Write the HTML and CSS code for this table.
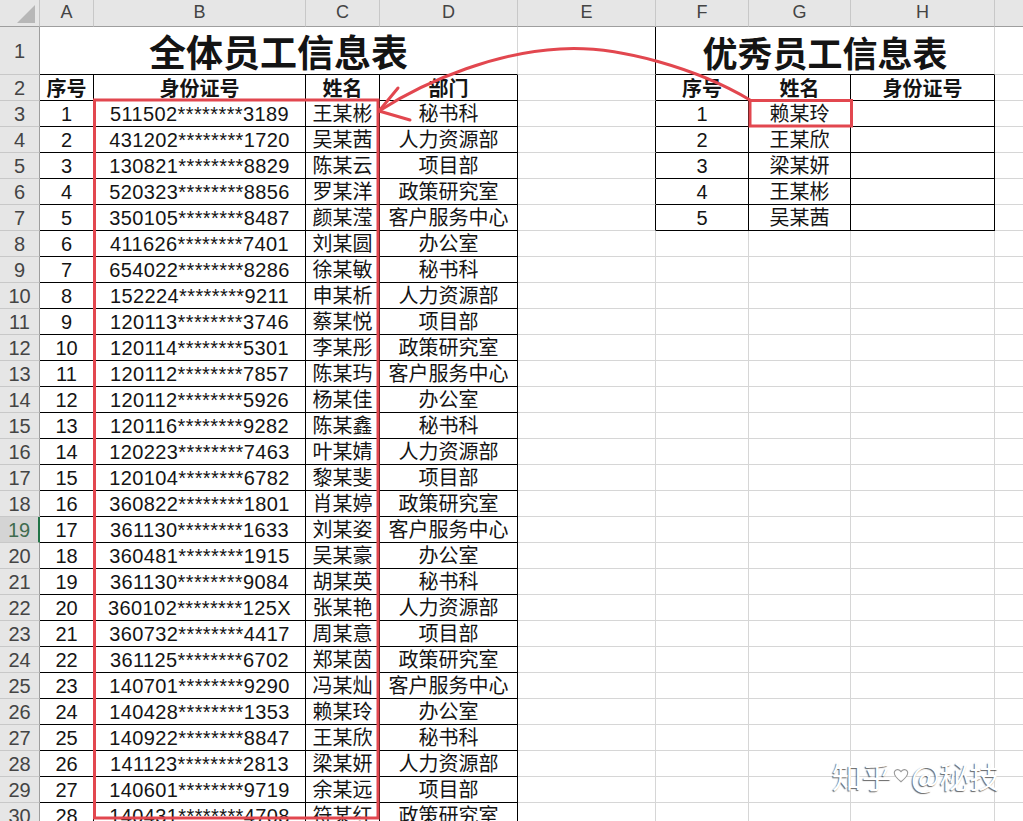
FILE: index.html
```html
<!DOCTYPE html>
<html lang="zh-CN">
<head>
<meta charset="utf-8">
<title>员工信息表</title>
<link rel="stylesheet" href="styles.css">
</head>
<body>
<div class="sheet">
<div class="corner"><svg width="40" height="27" viewBox="0 0 40 27"><polygon points="35,5 35,23 17,23" fill="#b7b7b7"/></svg></div><div class="ch">A</div><div class="ch">B</div><div class="ch">C</div><div class="ch">D</div><div class="ch">E</div><div class="ch">F</div><div class="ch">G</div><div class="ch">H</div><div class="ch"></div>
<div class="rh">1</div><div class="title t1">全体员工信息表</div><div class="ek"></div><div class="title t2">优秀员工信息表</div><div></div>
<div class="rh">2</div><div class="k b">序号</div><div class="k b">身份证号</div><div class="k b">姓名</div><div class="k b">部门</div><div class="ek"></div><div class="k b">序号</div><div class="k b">姓名</div><div class="k b">身份证号</div><div></div>
<div class="rh">3</div><div class="k">1</div><div class="k id">511502********3189</div><div class="k">王某彬</div><div class="k">秘书科</div><div class="ek"></div><div class="k">1</div><div class="k">赖某玲</div><div class="k"></div><div></div>
<div class="rh">4</div><div class="k">2</div><div class="k id">431202********1720</div><div class="k">吴某茜</div><div class="k">人力资源部</div><div class="ek"></div><div class="k">2</div><div class="k">王某欣</div><div class="k"></div><div></div>
<div class="rh">5</div><div class="k">3</div><div class="k id">130821********8829</div><div class="k">陈某云</div><div class="k">项目部</div><div class="ek"></div><div class="k">3</div><div class="k">梁某妍</div><div class="k"></div><div></div>
<div class="rh">6</div><div class="k">4</div><div class="k id">520323********8856</div><div class="k">罗某洋</div><div class="k">政策研究室</div><div class="ek"></div><div class="k">4</div><div class="k">王某彬</div><div class="k"></div><div></div>
<div class="rh">7</div><div class="k">5</div><div class="k id">350105********8487</div><div class="k">颜某滢</div><div class="k">客户服务中心</div><div class="ek"></div><div class="k">5</div><div class="k">吴某茜</div><div class="k"></div><div></div>
<div class="rh">8</div><div class="k">6</div><div class="k id">411626********7401</div><div class="k">刘某圆</div><div class="k">办公室</div><div></div><div></div><div></div><div></div><div></div>
<div class="rh">9</div><div class="k">7</div><div class="k id">654022********8286</div><div class="k">徐某敏</div><div class="k">秘书科</div><div></div><div></div><div></div><div></div><div></div>
<div class="rh">10</div><div class="k">8</div><div class="k id">152224********9211</div><div class="k">申某析</div><div class="k">人力资源部</div><div></div><div></div><div></div><div></div><div></div>
<div class="rh">11</div><div class="k">9</div><div class="k id">120113********3746</div><div class="k">蔡某悦</div><div class="k">项目部</div><div></div><div></div><div></div><div></div><div></div>
<div class="rh">12</div><div class="k">10</div><div class="k id">120114********5301</div><div class="k">李某彤</div><div class="k">政策研究室</div><div></div><div></div><div></div><div></div><div></div>
<div class="rh">13</div><div class="k">11</div><div class="k id">120112********7857</div><div class="k">陈某玙</div><div class="k">客户服务中心</div><div></div><div></div><div></div><div></div><div></div>
<div class="rh">14</div><div class="k">12</div><div class="k id">120112********5926</div><div class="k">杨某佳</div><div class="k">办公室</div><div></div><div></div><div></div><div></div><div></div>
<div class="rh">15</div><div class="k">13</div><div class="k id">120116********9282</div><div class="k">陈某鑫</div><div class="k">秘书科</div><div></div><div></div><div></div><div></div><div></div>
<div class="rh">16</div><div class="k">14</div><div class="k id">120223********7463</div><div class="k">叶某婧</div><div class="k">人力资源部</div><div></div><div></div><div></div><div></div><div></div>
<div class="rh">17</div><div class="k">15</div><div class="k id">120104********6782</div><div class="k">黎某斐</div><div class="k">项目部</div><div></div><div></div><div></div><div></div><div></div>
<div class="rh">18</div><div class="k">16</div><div class="k id">360822********1801</div><div class="k">肖某婷</div><div class="k">政策研究室</div><div></div><div></div><div></div><div></div><div></div>
<div class="rh sel">19</div><div class="k">17</div><div class="k id">361130********1633</div><div class="k">刘某姿</div><div class="k">客户服务中心</div><div></div><div></div><div></div><div></div><div></div>
<div class="rh">20</div><div class="k">18</div><div class="k id">360481********1915</div><div class="k">吴某豪</div><div class="k">办公室</div><div></div><div></div><div></div><div></div><div></div>
<div class="rh">21</div><div class="k">19</div><div class="k id">361130********9084</div><div class="k">胡某英</div><div class="k">秘书科</div><div></div><div></div><div></div><div></div><div></div>
<div class="rh">22</div><div class="k">20</div><div class="k id">360102********125X</div><div class="k">张某艳</div><div class="k">人力资源部</div><div></div><div></div><div></div><div></div><div></div>
<div class="rh">23</div><div class="k">21</div><div class="k id">360732********4417</div><div class="k">周某意</div><div class="k">项目部</div><div></div><div></div><div></div><div></div><div></div>
<div class="rh">24</div><div class="k">22</div><div class="k id">361125********6702</div><div class="k">郑某茵</div><div class="k">政策研究室</div><div></div><div></div><div></div><div></div><div></div>
<div class="rh">25</div><div class="k">23</div><div class="k id">140701********9290</div><div class="k">冯某灿</div><div class="k">客户服务中心</div><div></div><div></div><div></div><div></div><div></div>
<div class="rh">26</div><div class="k">24</div><div class="k id">140428********1353</div><div class="k">赖某玲</div><div class="k">办公室</div><div></div><div></div><div></div><div></div><div></div>
<div class="rh">27</div><div class="k">25</div><div class="k id">140922********8847</div><div class="k">王某欣</div><div class="k">秘书科</div><div></div><div></div><div></div><div></div><div></div>
<div class="rh">28</div><div class="k">26</div><div class="k id">141123********2813</div><div class="k">梁某妍</div><div class="k">人力资源部</div><div></div><div></div><div></div><div></div><div></div>
<div class="rh">29</div><div class="k">27</div><div class="k id">140601********9719</div><div class="k">余某远</div><div class="k">项目部</div><div></div><div></div><div></div><div></div><div></div>
<div class="rh">30</div><div class="k">28</div><div class="k id">140431********4708</div><div class="k">符某红</div><div class="k">政策研究室</div><div></div><div></div><div></div><div></div><div></div>
</div>

<svg class="marks" width="1023" height="821" viewBox="0 0 1023 821">
  <rect x="94.5" y="100" width="283.5" height="718" fill="none" stroke="#e2474f" stroke-width="3"/>
  <rect x="750" y="100.5" width="101.5" height="25.5" fill="none" stroke="#e2474f" stroke-width="3"/>
  <path d="M750,100 C700,70 620,45 560,49 C500,52 430,78 379,111" fill="none" stroke="#e2474f" stroke-width="3" stroke-linecap="round"/>
  <path d="M398,88 L379,111 L410,120" fill="none" stroke="#e2474f" stroke-width="3" stroke-linecap="round" stroke-linejoin="round"/>
</svg>

<div class="watermark">知乎<svg class="wm-icon" width="18" height="18" viewBox="0 0 16 16"><path d="M8,14 C3,10 1,7 2.5,4.5 C4,2.5 6.5,3 8,5 C9.5,3 12,2.5 13.5,4.5 C15,7 13,10 8,14 Z" fill="#fff" stroke="#9a9a9a" stroke-width="1"/></svg>@秘技</div>
</body>
</html>
```

FILE: styles.css
```css
html, body {
  margin: 0;
  padding: 0;
  background: #fff;
  overflow: hidden;
}

body {
  width: 1023px;
  height: 821px;
  position: relative;
  font-family: "Liberation Sans", "Noto Sans CJK SC", sans-serif;
  color: #141414;
}

.sheet {
  display: grid;
  grid-template-columns: 40px 54px 212px 74px 138px 138px 93px 102px 144px 60px;
  grid-template-rows: 27px 48px;
  grid-auto-rows: 26px;
  width: 1061px;
}

.sheet > div {
  box-sizing: border-box;
  border-right: 1px solid #d6d6d6;
  border-bottom: 1px solid #d6d6d6;
  display: flex;
  align-items: center;
  justify-content: center;
  font-size: 20px;
  line-height: 1.1;
  white-space: nowrap;
  overflow: hidden;
}

.sheet > .corner {
  background: #e6e6e6;
  border-right-color: #c4c4c4;
  border-bottom-color: #9e9e9e;
  display: block;
}

.corner svg {
  display: block;
}

.sheet > .ch {
  background: #e6e6e6;
  color: #444;
  font-size: 18px;
  border-right-color: #c8c8c8;
  border-bottom-color: #9e9e9e;
}

.sheet > .rh {
  background: #e6e6e6;
  color: #444;
  border-right-color: #9e9e9e;
  border-bottom-color: #c8c8c8;
}

.sheet > .rh.sel {
  background: #d4d4d4;
  color: #3f6b4f;
  border-right: 2px solid #217346;
}

.sheet > .k {
  border-right-color: #000;
  border-bottom-color: #000;
}

.sheet > .ek {
  border-right-color: #000;
}

.sheet > .b {
  font-weight: bold;
  font-family: "Noto Sans CJK SC", sans-serif;
  line-height: 1;
}

.sheet > .id {
  letter-spacing: 0.4px;
}

.sheet > .title {
  font-family: "Noto Sans CJK SC", sans-serif;
  font-weight: bold;
  line-height: 1;
  border-bottom-color: #000;
  padding-top: 2px;
}

.sheet > .t1 {
  grid-column: span 4;
  font-size: 37px;
}

.sheet > .t2 {
  grid-column: span 3;
  font-size: 35px;
}

.marks {
  position: absolute;
  left: 0;
  top: 0;
  pointer-events: none;
}

.watermark {
  position: absolute;
  left: 832px;
  top: 756px;
  font-family: "Noto Sans CJK SC", sans-serif;
  font-size: 30px;
  line-height: 38px;
  color: #fff;
  text-shadow: -1px 1px 1px rgba(0, 0, 0, 0.6);
  display: flex;
  align-items: center;
  white-space: nowrap;
}

.wm-icon {
  margin: 0 1px 0 0;
}
```
